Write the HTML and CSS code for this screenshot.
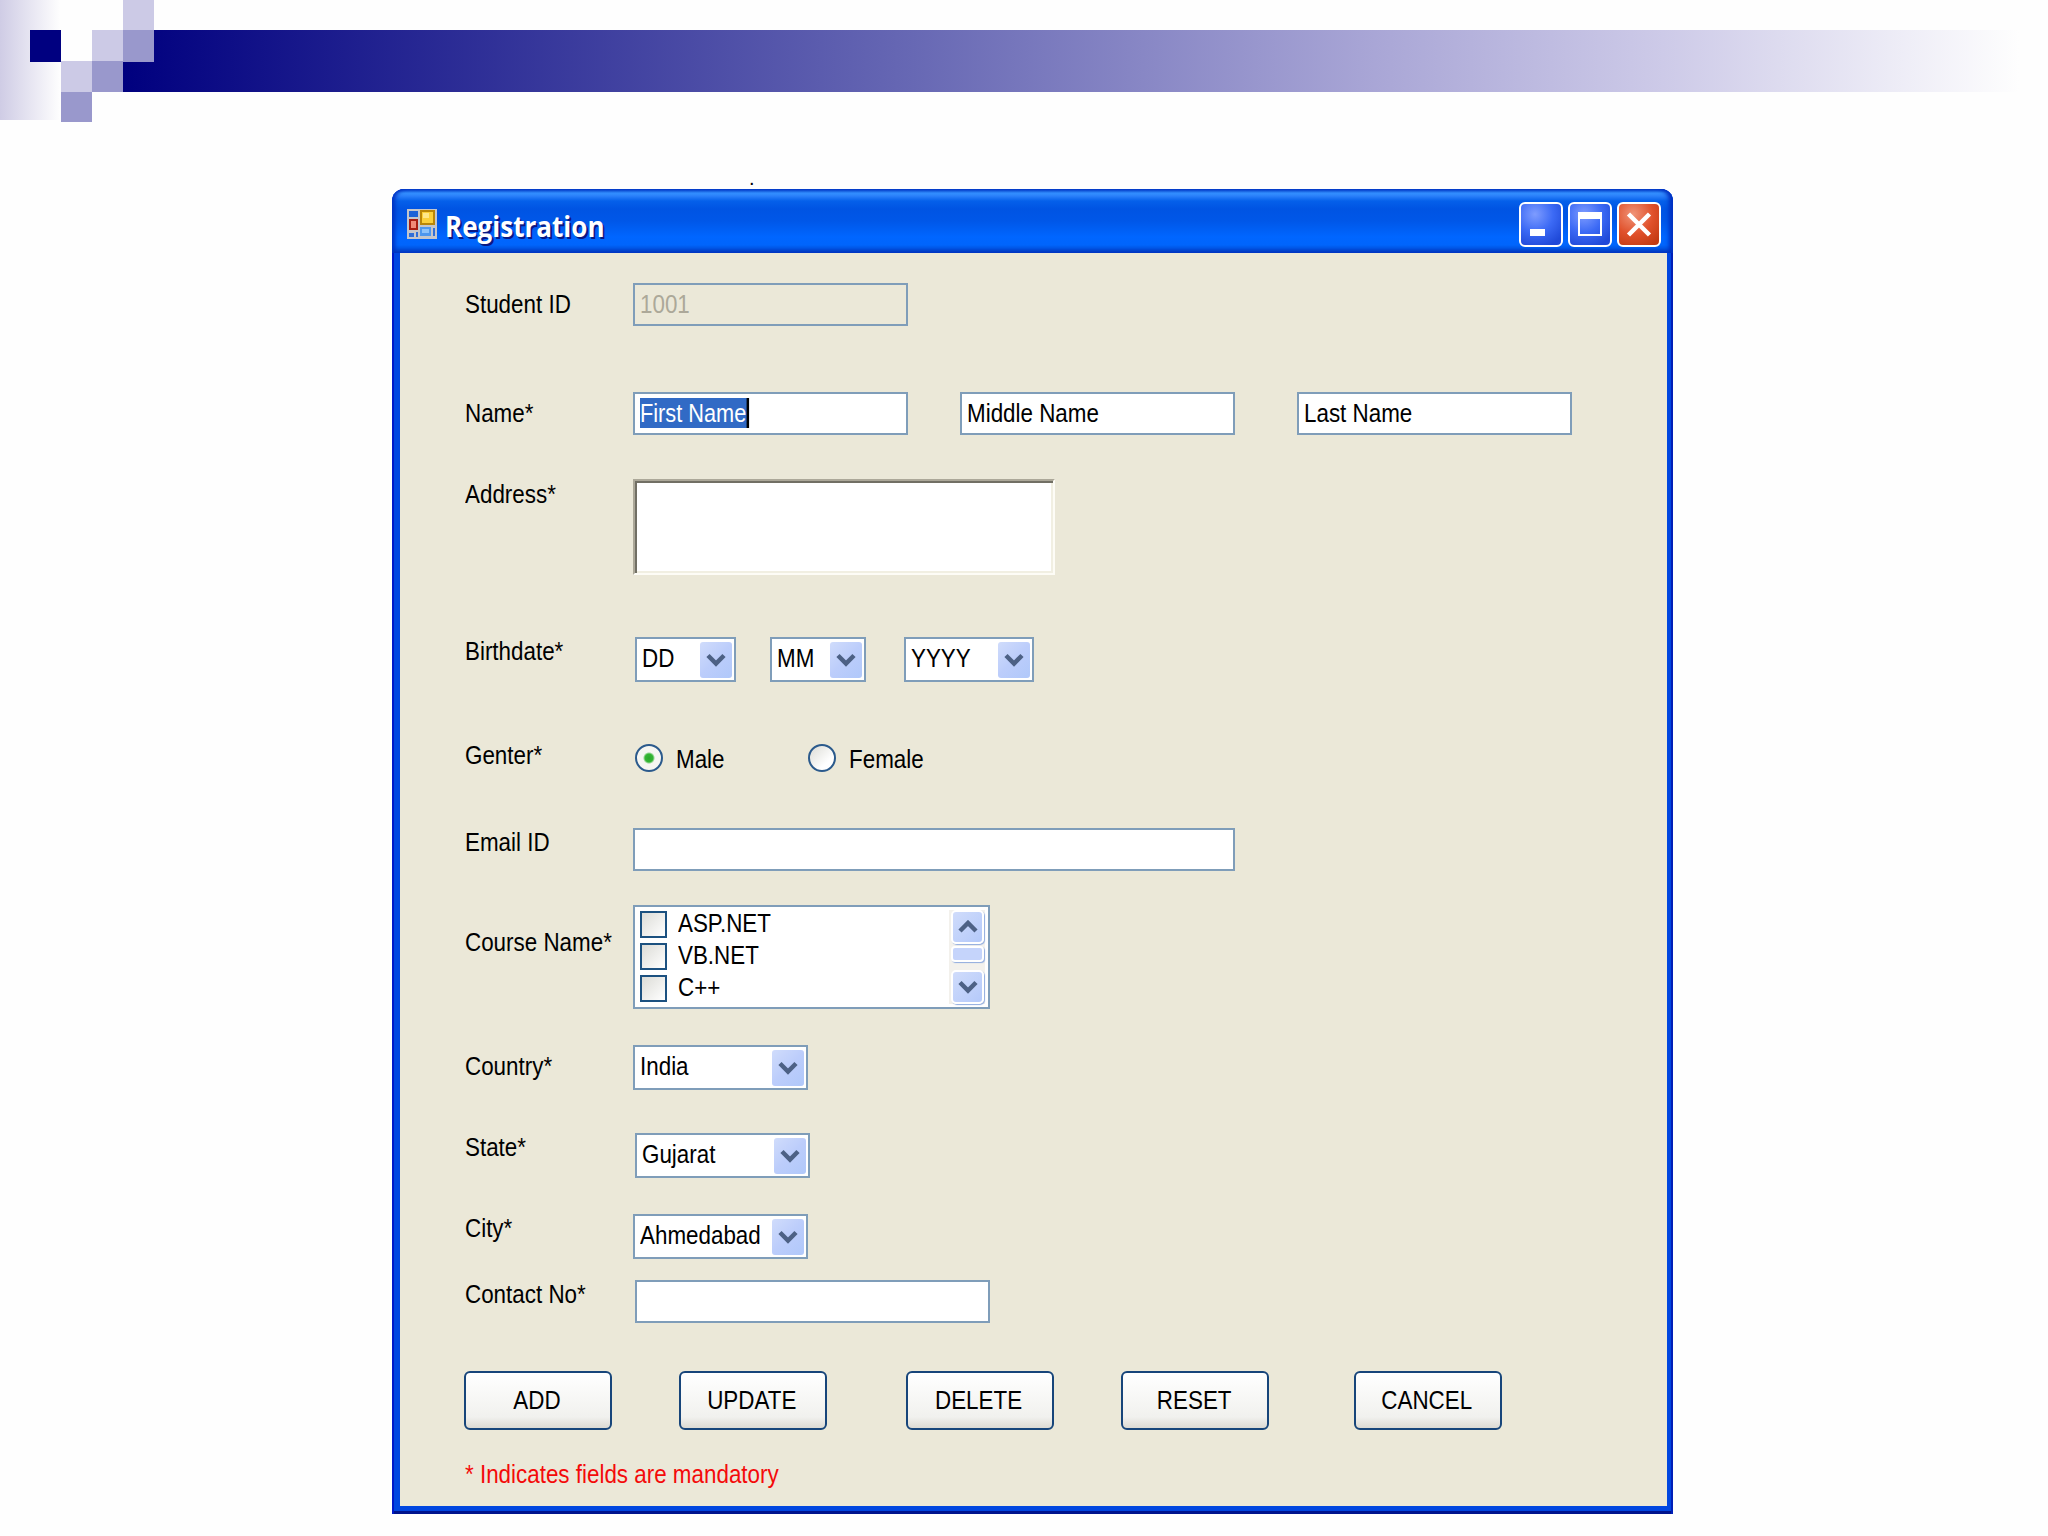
FILE: index.html
```
<!DOCTYPE html>
<html>

  <head>
    <meta charset="UTF-8" />
    <title>Registration</title>

    <!-- CSS Styling -->
    <link rel="stylesheet" href="styles.css">
  </head>

  <body>

  <!-- Slide banner -->
  <div class="banner">
    <svg class="squares" width="154" height="122" shape-rendering="crispEdges">
      <rect x="30" y="30" width="31" height="32" fill="#000080" />
      <rect x="123" y="0" width="31" height="30" fill="#cccae6" />
      <rect x="92" y="30" width="31" height="31" fill="#cccae6" />
      <rect x="123" y="30" width="31" height="32" fill="#9998cc" />
      <rect x="61" y="61" width="31" height="31" fill="#cccae6" />
      <rect x="92" y="61" width="31" height="31" fill="#9998cc" />
      <rect x="61" y="92" width="31" height="30" fill="#9998cc" />
    </svg>
  </div>
  <span class="dot">.</span>

  <div class="window">
    <div class="titlebar">
      <svg class="app-icon" width="30" height="30" viewBox="0 0 30 30">
        <rect width="30" height="30" fill="#c3c6cc" />
        <rect x="2" y="2" width="9" height="6" fill="#1b62d8" />
        <rect x="13" y="1" width="15" height="15" fill="#b98608" />
        <rect x="15" y="3" width="11" height="11" fill="#fbd03a" />
        <rect x="16" y="4" width="6" height="5" fill="#fee88a" />
        <rect x="2" y="10" width="9" height="11" fill="#a81d12" />
        <rect x="4" y="12" width="5" height="7" fill="#f08a78" />
        <rect x="2" y="24" width="5" height="4" fill="#2f6fd8" />
        <rect x="9" y="23" width="2" height="5" fill="#2f6fd8" />
        <rect x="13" y="18" width="11" height="9" fill="#4d97ee" />
        <rect x="15" y="20" width="7" height="4" fill="#8cc2fa" />
        <rect x="26" y="19" width="2" height="8" fill="#2f6fd8" />
      </svg>
      <h1><span>Registration</span></h1>
      <div class="controls">
        <div class="control">
          <svg width="40" height="41"><rect x="9" y="25" width="15" height="7" fill="#fff" /></svg>
        </div>
        <div class="control">
          <svg width="40" height="41" shape-rendering="crispEdges"><path d="M8 8h24v24H8z M10 15v15h20V15z" fill="#fff" fill-rule="evenodd" /></svg>
        </div>
        <div class="control close">
          <svg width="40" height="41"><path d="M9.5 10L30.5 31M30.5 10L9.5 31" stroke="#fff" /></svg>
        </div>
      </div>
    </div>

    <div class="form">
      <div class="row">
        <div class="label low"><span>Student ID</span></div>
        <div class="text disabled"><span>1001</span></div>
      </div>

      <div class="row">
        <div class="label low"><span>Name*</span></div>
        <div class="text"><span class="selected">First Name</span></div>
        <div class="text middle"><span>Middle Name</span></div>
        <div class="text last"><span>Last Name</span></div>
      </div>

      <div class="row">
        <div class="label"><span>Address*</span></div>
        <div class="textarea"></div>
      </div>

      <div class="row">
        <div class="label high"><span>Birthdate*</span></div>
        <div class="select day"><span>DD</span>
          <div class="arrow"><svg width="20" height="14"><path d="M2 2.5L10 10.5L18 2.5" /></svg></div>
        </div>
        <div class="select month"><span>MM</span>
          <div class="arrow"><svg width="20" height="14"><path d="M2 2.5L10 10.5L18 2.5" /></svg></div>
        </div>
        <div class="select year"><span>YYYY</span>
          <div class="arrow"><svg width="20" height="14"><path d="M2 2.5L10 10.5L18 2.5" /></svg></div>
        </div>
      </div>

      <div class="row">
        <div class="label"><span>Genter*</span></div>
        <div class="radio checked"><i></i><span>Male</span></div>
        <div class="radio"><i></i><span>Female</span></div>
      </div>

      <div class="row">
        <div class="label high"><span>Email ID</span></div>
        <div class="text email"></div>
      </div>

      <div class="row">
        <div class="label center"><span>Course Name*</span></div>
        <div class="listbox">
          <ul class="main-list">
            <li><i></i><span>ASP.NET</span></li>
            <li><i></i><span>VB.NET</span></li>
            <li><i></i><span>C++</span></li>
          </ul>
          <div class="scrollbar">
            <div class="scroll-button"><svg width="20" height="14"><path d="M2 11L10 3L18 11" /></svg></div>
            <div class="thumb"></div>
            <div class="scroll-button down"><svg width="20" height="14"><path d="M2 2.5L10 10.5L18 2.5" /></svg></div>
          </div>
        </div>
      </div>

      <div class="row">
        <div class="label low"><span>Country*</span></div>
        <div class="select"><span>India</span>
          <div class="arrow"><svg width="20" height="14"><path d="M2 2.5L10 10.5L18 2.5" /></svg></div>
        </div>
      </div>

      <div class="row">
        <div class="label high"><span>State*</span></div>
        <div class="select indent"><span>Gujarat</span>
          <div class="arrow"><svg width="20" height="14"><path d="M2 2.5L10 10.5L18 2.5" /></svg></div>
        </div>
      </div>

      <div class="row">
        <div class="label high"><span>City*</span></div>
        <div class="select"><span>Ahmedabad</span>
          <div class="arrow"><svg width="20" height="14"><path d="M2 2.5L10 10.5L18 2.5" /></svg></div>
        </div>
      </div>

      <div class="row">
        <div class="label high"><span>Contact No*</span></div>
        <div class="text contact indent"></div>
      </div>

      <div class="buttons">
        <div class="button"><span>ADD</span></div>
        <div class="button"><span>UPDATE</span></div>
        <div class="button"><span>DELETE</span></div>
        <div class="button"><span>RESET</span></div>
        <div class="button"><span>CANCEL</span></div>
      </div>

      <div class="note"><span>* Indicates fields are mandatory</span></div>
    </div>
  </div>

  </body>
</html>
```
FILE: styles.css
```
* {
  box-sizing: border-box;
}

body {
  margin: 0;
  height: 1536px;
  overflow: hidden;
  background: #fefefe;
  color: #000000;
  font-family: "Liberation Sans", Arial, sans-serif;
  font-size: 26.5px;
  line-height: 30px;
}

svg {
  display: block;
}

/* narrow the text to the width of the old dialog font */
.form span {
  display: inline-block;
  white-space: nowrap;
  transform: scaleX(0.845);
  transform-origin: left;
}

.banner {
  height: 122px;
  background:
    linear-gradient(to right, #00007f, #6768b4 41%, #a9a6d6 65%, #cdcae8 80%, #fefefe 98.5%) 123px 30px / 1925px 62px no-repeat,
    linear-gradient(to right, #cfcce5, #fefefe) 0 0 / 60px 120px no-repeat;
}

.dot {
  position: absolute;
  left: 749px;
  top: 163px;
  font-size: 20px;
}

.window {
  display: flex;
  flex-direction: column;
  width: 1281px;
  height: 1325px;
  margin: 67px 0 0 392px;
  padding: 0 6px 8px 8px;
  border-radius: 12px 12px 0 0;
  background: #0046e0;
  box-shadow: inset 2px 0 #0019c8, inset -2px 0 #001fb8, inset 0 -3px #00138c;
}

.titlebar {
  display: flex;
  flex: none;
  height: 64px;
  margin: 0 -6px 0 -8px;
  padding: 13px 12px 0 15px;
  border-radius: 12px 12px 0 0;
  background: linear-gradient(#0a50d8, #3593ff 4px, #2a80fa 7px, #0560ea 12px, #0054e3 20px, #0057e8 32px, #0066ff 48px, #0065fc 56px, #0043c8 63px);
  box-shadow: inset 3px 0 4px #0030c0, inset -4px 0 4px #0030c0;
}

.app-icon {
  margin-top: 7px;
}

h1 {
  flex: 1;
  margin: 5px 0 0 8px;
  color: #ffffff;
  font-family: "Open Sans", sans-serif;
  font-size: 28px;
  font-weight: bold;
  line-height: 38px;
  text-shadow: 2px 2px #0a1883;
}

h1 span {
  display: inline-block;
  transform: scaleX(0.93);
  transform-origin: left;
}

.controls {
  display: flex;
  gap: 5px;
}

.control {
  width: 44px;
  height: 45px;
  border: 2px solid #ffffff;
  border-radius: 6px;
  background: radial-gradient(circle at 35% 25%, #7e9cff, #3c6af5 45%, #1f49d8 85%);
}

.close {
  background: radial-gradient(circle at 35% 25%, #f09478, #e0502a 50%, #c23a12 90%);
}

.close path {
  stroke-width: 4.5;
}

.form {
  display: grid;
  flex: 1;
  grid-template-rows: 109px 87px 158px 103px 88px 77px 140px 88px 81px 66px 91px 88px 30px;
  padding: 30px 0 0 65px;
  background: #ebe8d8;
}

.row {
  display: flex;
  align-items: flex-start;
}

.label {
  width: 168px;
}

.low {
  margin-top: 6px;
}

.high {
  margin-top: -1px;
}

.center {
  margin-top: 22px;
}

.text {
  width: 275px;
  height: 43px;
  padding: 4px 5px;
  border: 2px solid #7f9db9;
  background: #ffffff;
}

.disabled {
  background: #ebe8d8;
  color: #aca899;
}

.form .selected {
  background: #316ac5;
  color: #ffffff;
  border-right: 3px solid #000000;
  transform: scaleX(0.82);
}

.middle {
  margin-left: 52px;
}

.last {
  margin-left: 62px;
}

.email {
  width: 602px;
}

.contact {
  width: 355px;
}

.indent {
  margin-left: 2px;
}

.textarea {
  width: 422px;
  height: 96px;
  border: 2px solid;
  border-color: #aca899 #fdfcf6 #fdfcf6 #aca899;
  background: #ffffff;
  box-shadow: inset 2px 2px #716f64, inset -2px -2px #f1efe2;
}

.select {
  display: flex;
  justify-content: space-between;
  width: 175px;
  height: 45px;
  padding: 3px 2px 2px 5px;
  border: 2px solid #7f9db9;
  background: #ffffff;
}

.select span {
  width: 0;
  margin-top: 1px;
}

.day {
  width: 101px;
  margin-left: 2px;
}

.month {
  width: 96px;
  margin-left: 34px;
}

.year {
  width: 130px;
  margin-left: 38px;
}

.arrow {
  display: flex;
  align-items: center;
  justify-content: center;
  width: 32px;
  height: 36px;
  border-radius: 3px;
  background: linear-gradient(135deg, #d0dcfb, #bccdfb 50%, #b0c8fa);
}

.arrow path,
.scroll-button path {
  fill: none;
  stroke: #4d6185;
  stroke-width: 4.5;
}

.radio {
  display: flex;
  width: 173px;
  margin: 4px 0 0 2px;
}

.radio + .radio {
  margin-left: 0;
}

.radio i {
  width: 28px;
  height: 28px;
  margin-right: 13px;
  border: 2px solid #2b5a8c;
  border-radius: 50%;
  background: linear-gradient(135deg, #dcdcd6, #ffffff 70%);
}

.radio.checked i {
  background: radial-gradient(circle, #2aa82a 0, #34b634 4px, #f6f6f2 6px);
}

.listbox {
  display: flex;
  justify-content: space-between;
  width: 357px;
  height: 104px;
  padding: 3px 3px 3px 5px;
  border: 2px solid #7f9db9;
  background: #ffffff;
}

.main-list {
  margin: 0;
  padding: 0;
  list-style: none;
}

.main-list li {
  display: flex;
  height: 32px;
}

.main-list i {
  width: 27px;
  height: 27px;
  margin: 1px 11px 0 0;
  border: 2px solid #1c5180;
  background: linear-gradient(135deg, #dcdcd7, #ffffff);
}

.main-list span {
  margin-top: -2px;
}

.scrollbar {
  display: flex;
  flex-direction: column;
  gap: 2px;
  width: 36px;
  padding: 0 1px 0 2px;
  background: #f3f1ec;
}

.scroll-button {
  display: flex;
  align-items: center;
  justify-content: center;
  height: 34px;
  border: 2px solid #ffffff;
  border-radius: 5px;
  background: linear-gradient(135deg, #d0dcfb, #b4c9fa);
  box-shadow: 1px 1px 1px #8fabdf;
}

.thumb {
  height: 16px;
  border: 2px solid #ffffff;
  border-radius: 4px;
  background: #c5d4fb;
  box-shadow: 1px 1px 1px #8fabdf;
}

.down {
  margin-top: auto;
}

.buttons {
  display: grid;
  grid-template-columns: 215px 227px 215px 233px 148px;
  margin-left: -1px;
}

.button {
  width: 148px;
  height: 59px;
  padding-top: 12px;
  border: 2px solid #17457a;
  border-radius: 6px;
  background: linear-gradient(#ffffff, #f1f1ee 80%, #dcdad3);
  text-align: center;
}

.button span {
  margin-left: -2px;
  transform-origin: center;
}

.note {
  color: #f40a0a;
}
```
